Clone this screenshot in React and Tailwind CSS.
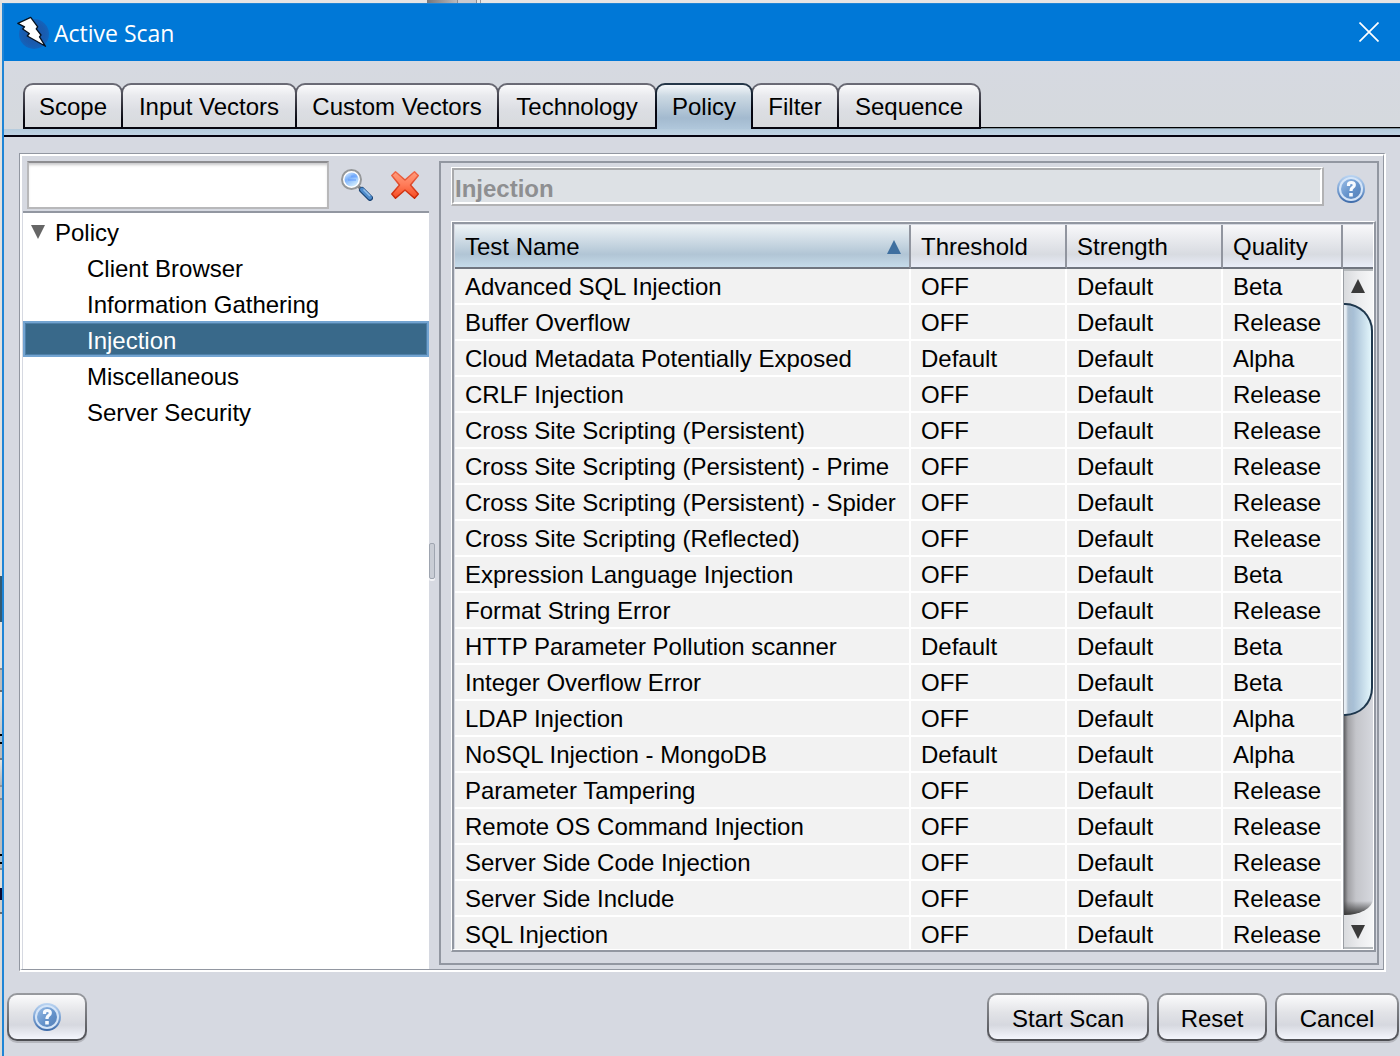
import React from "react";

const tabs = [
  { name: "Scope", width: "w-[100px]" },
  { name: "Input Vectors", width: "w-[176px]" },
  { name: "Custom Vectors", width: "w-[204px]" },
  { name: "Technology", width: "w-[160px]" },
  { name: "Policy", width: "w-[98px]" },
  { name: "Filter", width: "w-[88px]" },
  { name: "Sequence", width: "w-[144px]" },
];

const categories = [
  "Client Browser",
  "Information Gathering",
  "Injection",
  "Miscellaneous",
  "Server Security",
];

const rows = [
  ["Advanced SQL Injection", "OFF", "Default", "Beta"],
  ["Buffer Overflow", "OFF", "Default", "Release"],
  ["Cloud Metadata Potentially Exposed", "Default", "Default", "Alpha"],
  ["CRLF Injection", "OFF", "Default", "Release"],
  ["Cross Site Scripting (Persistent)", "OFF", "Default", "Release"],
  ["Cross Site Scripting (Persistent) - Prime", "OFF", "Default", "Release"],
  ["Cross Site Scripting (Persistent) - Spider", "OFF", "Default", "Release"],
  ["Cross Site Scripting (Reflected)", "OFF", "Default", "Release"],
  ["Expression Language Injection", "OFF", "Default", "Beta"],
  ["Format String Error", "OFF", "Default", "Release"],
  ["HTTP Parameter Pollution scanner", "Default", "Default", "Beta"],
  ["Integer Overflow Error", "OFF", "Default", "Beta"],
  ["LDAP Injection", "OFF", "Default", "Alpha"],
  ["NoSQL Injection - MongoDB", "Default", "Default", "Alpha"],
  ["Parameter Tampering", "OFF", "Default", "Release"],
  ["Remote OS Command Injection", "OFF", "Default", "Release"],
  ["Server Side Code Injection", "OFF", "Default", "Release"],
  ["Server Side Include", "OFF", "Default", "Release"],
  ["SQL Injection", "OFF", "Default", "Release"],
];

// Sliver of the window that lies behind the dialog.
const sliver = [
  "h-[576px] bg-[#e3e2df]",
  "h-[46px] bg-[#335b73]",
  "h-[46px] bg-[#e3e2df]",
  "h-[2px] bg-[#85888c]",
  "h-[20px] bg-[#bcbcbc]",
  "h-[2px] bg-[#6a6c6e]",
  "h-[42px] bg-linear-to-b from-[#e6e5e0] to-[#c2c6ca]",
  "h-[2px] bg-black",
  "h-[6px] bg-[#a9bccb]",
  "h-[2px] bg-black",
  "h-[14px] bg-[#bcbcbc]",
  "h-[2px] bg-[#76787a]",
  "h-[25px] bg-linear-to-b from-[#e6e5e0] to-[#b0b4b8]",
  "h-[2px] bg-[#909396]",
  "h-[11px] bg-[#c6c6c6]",
  "h-[2px] bg-[#85888c]",
  "h-[54px] bg-[#bcbcbc]",
  "h-[2px] bg-black",
  "h-[6px] bg-[#a9bccb]",
  "h-[2px] bg-black",
  "h-[4px] bg-[#bcbcbc]",
  "h-[2px] bg-[#85888c]",
  "h-[18px] bg-[#dfdedb]",
  "h-[12px] bg-[#0a0a30]",
  "h-[12px] bg-[#cfcfcd]",
  "h-[2px] bg-[#6a6c6e]",
  "flex-1 bg-[#dcdbd8]",
];

function ZapIcon() {
  return (
    <svg width="34" height="34" viewBox="0 0 34 34" aria-hidden="true">
      <defs>
        <radialGradient id="zapDisc">
          <stop offset="0" stopColor="#1c56a6" />
          <stop offset="0.7" stopColor="#195cb0" />
          <stop offset="1" stopColor="#1264bd" />
        </radialGradient>
      </defs>
      <circle cx="17" cy="18" r="15" fill="url(#zapDisc)" />
      <path
        d="M0.800 7.300 13.700 1.300 20.700 10.800 19.200 12.800 24 19 22.500 20.800 28.500 30.300 10.300 20 12.300 17.500 5.700 13 7.500 10.800Z"
        fill="#fff"
        stroke="#06101c"
        strokeWidth="1.300"
        strokeLinejoin="round"
      />
    </svg>
  );
}

function HelpIcon({ id }) {
  return (
    <svg width="28" height="28" viewBox="0 0 28 28" aria-hidden="true">
      <defs>
        <linearGradient id={id + "ring"} x1="0" y1="0" x2="0" y2="1">
          <stop offset="0" stopColor="#bcd5f2" />
          <stop offset="0.5" stopColor="#7fa6d6" />
          <stop offset="1" stopColor="#3c69a8" />
        </linearGradient>
        <linearGradient id={id + "disc"} x1="0" y1="0" x2="1" y2="1">
          <stop offset="0" stopColor="#98bce6" />
          <stop offset="0.55" stopColor="#6593cb" />
          <stop offset="1" stopColor="#5580b8" />
        </linearGradient>
      </defs>
      <circle cx="14" cy="14" r="14" fill={"url(#" + id + "ring)"} />
      <circle cx="14" cy="14" r="12" fill="#d5e5f8" />
      <circle cx="14" cy="14" r="10" fill={"url(#" + id + "disc)"} />
      <path
        d="M11.500 11V9.500Q11.500 7.500 14.300 7.500 17.300 7.500 17.300 10 17.300 11.700 15.500 12.700 14 13.500 14 16"
        fill="none"
        stroke="#f6faff"
        strokeWidth="3.200"
      />
      <path d="M12.200 18h3.600v3.500h-3.600z" fill="#f6faff" />
    </svg>
  );
}

function SearchIcon() {
  return (
    <svg width="32" height="32" viewBox="0 0 32 32" aria-hidden="true">
      <defs>
        <linearGradient id="lens" x1="0.1" y1="0" x2="0.7" y2="1">
          <stop offset="0" stopColor="#dcedff" />
          <stop offset="0.4" stopColor="#7db2fb" />
          <stop offset="1" stopColor="#d4efff" />
        </linearGradient>
      </defs>
      <path d="M17 17 21 21" stroke="#77797c" strokeWidth="3" />
      <path d="M21 21 29 29" stroke="#1c4677" strokeWidth="6" strokeLinecap="round" />
      <path d="M21 20.500 29 28.500" stroke="#4f8bcb" strokeWidth="4" strokeLinecap="round" />
      <path d="M22.500 20.500 29 27" stroke="#93bfe9" strokeWidth="1.500" />
      <circle cx="10.500" cy="10.500" r="9.500" fill="#fff" stroke="#96989a" strokeWidth="2" />
      <circle cx="10.500" cy="10.500" r="7" fill="url(#lens)" />
      <path d="M10 7.500h6M7 11h8" stroke="#5590ff" strokeWidth="2" opacity="0.400" />
    </svg>
  );
}

function ClearIcon() {
  return (
    <svg width="28" height="28" viewBox="0 0 28 28" aria-hidden="true">
      <defs>
        <linearGradient id="cross" x1="0" y1="0" x2="0" y2="1">
          <stop offset="0" stopColor="#ff9c7d" />
          <stop offset="0.500" stopColor="#ff7b58" />
          <stop offset="1" stopColor="#f64a20" />
        </linearGradient>
        <linearGradient id="crossEdge" x1="0" y1="0" x2="0" y2="1">
          <stop offset="0" stopColor="#f0694a" />
          <stop offset="1" stopColor="#c92503" />
        </linearGradient>
      </defs>
      <path
        d="M4.500 0.800 14 9 23.500 0.800 27.300 4.500 19.500 14 27.300 23 23.500 27.300 14 19 4.500 27.300 0.800 23 8.500 14 0.800 4.500Z"
        fill="url(#cross)"
        stroke="url(#crossEdge)"
        strokeWidth="1.500"
        strokeLinejoin="round"
      />
    </svg>
  );
}

function TabStrip() {
  return (
    <div className="bg-linear-to-b from-[#d6d9e1] to-[#d5d9dd] pt-[22px]">
      <div role="tablist" className="flex pl-[19px]">
        {tabs.map((tab, i) => {
          const selected = tab.name === "Policy";
          return (
            <button
              key={tab.name}
              type="button"
              role="tab"
              aria-selected={selected}
              className={
                "relative h-[46px] shrink-0 rounded-t-[10px] border-2 border-transparent pt-[2px] text-center leading-[40px] " +
                tab.width +
                (i > 0 ? " -ml-[2px]" : "") +
                (selected
                  ? " z-10 border-b-0 pb-[2px] [background:linear-gradient(#f4f7fa,#ccd9e3_25%,#a3bacf_75%,#b0c7db)_padding-box,linear-gradient(#26394b,#04040f_60%)_border-box]"
                  : " [background:linear-gradient(#fbfbfc,#e9eaee_25%,#dcdee3_60%,#d7dadd)_padding-box,linear-gradient(#6d6d78,#06060f_80%)_border-box]")
              }
            >
              {tab.name}
            </button>
          );
        })}
        <div className="flex-1 self-end border-t border-black bg-[#7f909c] pt-[1px]" />
      </div>
      <div className="h-[8px] border-b-2 border-[#05020f] bg-linear-to-b from-[#b5cbdd] to-[#bfd2e2]" />
    </div>
  );
}

function PolicyTree() {
  return (
    <section className="flex w-[407px] shrink-0 flex-col pl-[1px]">
      <div className="flex h-[57px] items-start border-b-2 border-[#9297a1] pt-[5px] pl-[4px]">
        <input
          type="text"
          aria-label="Search policies"
          className="h-[48px] w-[302px] border-2 border-[#b8b8ba] border-t-[#8d8d90] bg-white px-1 shadow-[inset_0_3px_3px_-1px_#c8c8ca] outline-none"
        />
        <button type="button" aria-label="Search" className="mt-[8px] ml-[12px]">
          <SearchIcon />
        </button>
        <button type="button" aria-label="Clear" className="mt-[10px] ml-[18px]">
          <ClearIcon />
        </button>
      </div>
      <ul role="tree" className="min-h-0 flex-1 overflow-hidden bg-white leading-[36px]">
        <li role="treeitem" aria-expanded="true">
          <div className="flex h-[36px] items-center pt-[2px] pl-[8px]">
            <svg width="14" height="14" viewBox="0 0 14 14" aria-hidden="true">
              <path d="M0 0h14L7 14Z" fill="#666" />
            </svg>
            <span className="ml-[10px] pt-[1px]">Policy</span>
          </div>
          <ul role="group">
            {categories.map((name) => (
              <li
                key={name}
                role="treeitem"
                aria-selected={name === "Injection"}
                className={
                  name === "Injection"
                    ? "h-[36px] border-2 border-[#73a4d1] bg-[#39698a] pl-[62px] leading-[35px] text-white shadow-[inset_0_0_0_1px_#4d7fa8]"
                    : "h-[36px] pt-[2px] pl-[64px]"
                }
              >
                {name}
              </li>
            ))}
          </ul>
        </li>
      </ul>
    </section>
  );
}

const headCell =
  "h-[44px] border-r-2 border-b-2 border-r-[#91959f] border-b-[#70757f] pt-[2px] pl-[10px] text-left font-normal bg-linear-to-b from-[#f8f8fa] via-[#d8dbe1] via-70% to-[#e9edf8]";

function TestTable() {
  return (
    <div className="min-h-0 flex-1 border-t border-r-2 border-b-2 border-l border-t-white border-r-[#9297a1] border-b-[#9297a1] border-l-white">
      <div className="flex h-full flex-col border-t-2 border-r border-b border-l-2 border-t-[#9297a1] border-r-white border-b-white border-l-[#9297a1] pt-[1px] pl-[1px]">
        <div className="flex min-h-0 flex-1">
          <div className="min-w-0 flex-1 overflow-hidden bg-white">
            <table className="w-full table-fixed border-separate border-spacing-0">
              <colgroup>
                <col />
                <col className="w-[156px]" />
                <col className="w-[156px]" />
                <col className="w-[120px]" />
              </colgroup>
              <thead>
                <tr>
                  <th
                    scope="col"
                    aria-sort="ascending"
                    className="h-[44px] border-r-2 border-b-2 border-r-[#91959f] border-b-[#70757f] bg-linear-to-b from-[#eef3f6] via-[#b1c5d5] via-70% to-[#c6dbea] pt-[2px] pr-[8px] pl-[10px] text-left font-normal"
                  >
                    <span className="flex items-center justify-between">
                      Test Name
                      <svg width="14" height="14" viewBox="0 0 14 14" aria-hidden="true">
                        <path d="M0 14h14L7 0Z" fill="#3f6f9f" />
                      </svg>
                    </span>
                  </th>
                  <th scope="col" className={headCell}>Threshold</th>
                  <th scope="col" className={headCell}>Strength</th>
                  <th scope="col" className={headCell}>Quality</th>
                </tr>
              </thead>
              <tbody>
                {rows.map((row) => (
                  <tr key={row[0]}>
                    {row.map((cell, i) => (
                      <td
                        key={i}
                        className="h-[36px] border-r-2 border-b-2 border-white bg-[#f2f2f2] p-0 pt-[1px] pl-[10px] leading-[33px] whitespace-nowrap"
                      >
                        {cell}
                      </td>
                    ))}
                  </tr>
                ))}
              </tbody>
            </table>
          </div>
          <div className="flex w-[30px] shrink-0 flex-col">
            <div className="h-[44px] border-b-2 border-[#70757f] bg-linear-to-b from-[#f8f8fa] via-[#d8dbe1] via-70% to-[#e9edf8]" />
            <div className="flex min-h-0 flex-1 flex-col border-l border-[#9a9ea4] bg-linear-to-r from-[#d9dbde] via-[#ebecee] to-[#f6f7f8]">
              <button
                type="button"
                aria-label="Scroll up"
                className="flex h-[34px] items-center justify-center border-t-2 border-[#b6babd] pr-[2px] pb-[2px]"
              >
                <svg width="14" height="14" viewBox="0 0 14 14" aria-hidden="true">
                  <path d="M0 14h14L7 0Z" fill="#3a3a3a" />
                </svg>
              </button>
              <div className="min-h-0 flex-1 rounded-tr-[28px] rounded-br-[28px_16px] bg-[linear-gradient(to_top,#3a3a3a,transparent_14px),linear-gradient(to_right,#5f5f62,#a2a2a6_4px,#c4c5ca_12px,#d6d8de)]">
                <div className="h-[67.500%] rounded-r-[28px] border-2 border-l-0 border-[#1e374d] bg-linear-to-r from-[#a9b9c8] via-[#a8c0d6] via-35% to-[#e2f5fb] shadow-[inset_3px_0_2px_#e8eff5]" />
              </div>
              <button
                type="button"
                aria-label="Scroll down"
                className="flex h-[34px] items-center justify-center border-b-2 border-[#b6babd] pt-[2px] pr-[2px]"
              >
                <svg width="14" height="14" viewBox="0 0 14 14" aria-hidden="true">
                  <path d="M0 0h14L7 14Z" fill="#3a3a3a" />
                </svg>
              </button>
            </div>
          </div>
        </div>
      </div>
    </div>
  );
}

function PolicyDetail() {
  return (
    <section className="mt-[5px] mr-[4px] mb-[4px] flex min-w-0 flex-1 flex-col border-2 border-[#9297a1] pt-[4px] pr-[1px] pb-[11px] pl-[10px]">
      <div className="flex items-start pr-[11px]">
        <div className="min-w-0 flex-1 border-t border-r-2 border-b-2 border-l border-t-white border-r-[#b2b2b4] border-b-[#b2b2b4] border-l-white">
          <input
            type="text"
            disabled
            aria-label="Category"
            defaultValue="Injection"
            className="block h-[36px] w-full border-2 border-t-[#a9aaac] border-r-white border-b-white border-l-[#a9aaac] bg-[#dde1e5] pt-[6px] pl-px font-bold text-[#8e8f91]"
          />
        </div>
        <button type="button" aria-label="Help" className="mt-[8px] ml-[13px]">
          <HelpIcon id="top" />
        </button>
      </div>
      <div className="flex min-h-0 flex-1 pt-[15px]">
        <div className="flex min-w-0 flex-1 flex-col">
          <TestTable />
        </div>
      </div>
    </section>
  );
}

const pushButton =
  "flex h-[48px] items-center justify-center rounded-[10px] border-2 border-transparent pt-[4px] shadow-[0_2px_0_#b4b6bd] [background:linear-gradient(#fbfbfc,#e2e3e7_40%,#d6d8df_68%,#f4f6fd)_padding-box,linear-gradient(#989a9f,#4c4d52)_border-box]";

export default function App() {
  return (
    <div className="flex h-screen flex-col overflow-hidden bg-[#e6e5e4] font-['Liberation_Sans',Arial,sans-serif] text-[24px] leading-[28px] text-black">
      <div className="flex h-[3px] shrink-0 pl-[427px]">
        <div className="w-[30px] bg-linear-to-r from-[#77777a] to-[#b9b9bc]" />
        <div className="w-[20px] border-x border-[#8d8d92] bg-[#c9cacf]" />
        <div className="w-[4px] border-r border-[#9a9a9e]" />
      </div>
      <div className="flex min-h-0 flex-1">
        <div className="-mt-[3px] flex w-[2px] shrink-0 flex-col" aria-hidden="true">
          {sliver.map((style, i) => (
            <div key={i} className={"shrink-0 " + style} />
          ))}
        </div>
        <main className="flex min-w-0 flex-1 flex-col border-l-2 border-[#1f85d6] bg-[#d6d9e1]">
          <header className="-ml-[2px] flex h-[58px] shrink-0 items-center border-t border-l-2 border-[#1f85d6] bg-[#0078d7] pr-[21px] pl-[13px]">
            <ZapIcon />
            <h1 className="ml-[3px] flex-1 pt-[1px] font-['Open_Sans','Noto_Sans',sans-serif] text-[23px] font-normal text-white">
              Active Scan
            </h1>
            <button type="button" aria-label="Close" className="pb-[2px]">
              <svg width="20" height="20" viewBox="0 0 20 20" aria-hidden="true">
                <path d="M0.500 0.500 19.500 19.500M19.500 0.500 0.500 19.500" stroke="#fff" strokeWidth="1.700" />
              </svg>
            </button>
          </header>
          <TabStrip />
          <div className="mt-[16px] mr-[14px] ml-[15px] flex min-h-0 flex-1 border-t border-r-2 border-b-2 border-l border-t-[#9297a1] border-r-white border-b-white border-l-[#9297a1]">
            <div className="flex min-w-0 flex-1 border-t-2 border-r border-b border-l-2 border-t-white border-r-[#9297a1] border-b-[#9297a1] border-l-white">
              <PolicyTree />
              <div className="flex w-[10px] shrink-0 items-center pb-[4px]">
                <div className="h-[36px] w-[6px] rounded-[2px] border border-[#9fa5b0] bg-[#c9cdd5] shadow-[0_2px_0_#f2f3f6]" />
              </div>
              <PolicyDetail />
            </div>
          </div>
          <footer className="flex h-[84px] shrink-0 items-start gap-2 pt-[21px] pr-[1px] pl-[3px]">
            <button type="button" aria-label="Help" className={pushButton + " mr-auto w-[80px] pb-[4px]"}>
              <HelpIcon id="bottom" />
            </button>
            <button type="button" className={pushButton + " w-[162px]"}>Start Scan</button>
            <button type="button" className={pushButton + " w-[110px]"}>Reset</button>
            <button type="button" className={pushButton + " w-[124px]"}>Cancel</button>
          </footer>
        </main>
      </div>
    </div>
  );
}
